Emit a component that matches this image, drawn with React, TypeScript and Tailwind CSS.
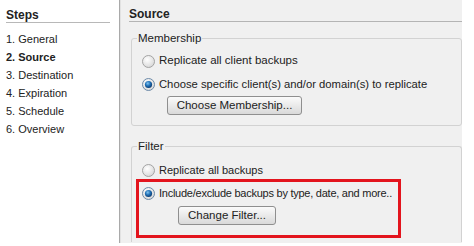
import React from "react";

const font = { fontFamily: '"Liberation Sans", Arial, sans-serif' };

function Radio({ checked }: { checked?: boolean }) {
  const id = checked ? "rc" : "ru";
  return (
    <svg width="13" height="13" viewBox="0 0 13 13" className="shrink-0">
      <defs>
        <radialGradient id={id + "bg"} cx="0.4" cy="0.35" r="0.7">
          <stop offset="0" stopColor="#ffffff" />
          <stop offset="1" stopColor="#d6d6d6" />
        </radialGradient>
        <radialGradient id={id + "dot"} cx="0.4" cy="0.35" r="0.7">
          <stop offset="0" stopColor="#7fc3f0" />
          <stop offset="0.5" stopColor="#1f6fb5" />
          <stop offset="1" stopColor="#0b3466" />
        </radialGradient>
      </defs>
      <circle cx="6.5" cy="6.5" r="6" fill={`url(#${id}bg)`} stroke={checked ? "#6d8aa8" : "#a3a3a3"} strokeWidth="1" />
      {checked && <circle cx="6.5" cy="6.5" r="3.6" fill={`url(#${id}dot)`} />}
    </svg>
  );
}

function Btn({ label, w }: { label: string; w: string }) {
  return (
    <div
      className={`${w} h-[19px] flex items-center justify-center rounded-[3px] border border-[#8f8f8f] bg-gradient-to-b from-[#fbfbfb] to-[#d9d9d9] text-[11.5px] text-[#222] whitespace-nowrap`}
    >
      {label}
    </div>
  );
}

function Row({ checked, label, cls }: { checked?: boolean; label: string; cls: string }) {
  return (
    <div className={`flex items-center h-[18px] gap-[4px] text-[#222] whitespace-nowrap ${cls}`}>
      <Radio checked={checked} />
      <span>{label}</span>
    </div>
  );
}

export default function App() {
  const steps = ["1. General", "2. Source", "3. Destination", "4. Expiration", "5. Schedule", "6. Overview"];
  return (
    <div className="w-[474px] h-[246px] bg-white flex items-start" style={font}>
      <div className="w-[119px] h-[243px] pl-[6px] pr-[9px] pt-[8px]">
        <div className="text-[12px] font-bold leading-[14px] text-[#222] border-b border-[#b8b8b8] h-[15px]">Steps</div>
        <div className="mt-[7px] flex flex-col">
          {steps.map((s, i) => (
            <div key={s} className={`h-[18px] leading-[18px] text-[11px] text-[#222] ${i === 1 ? "font-bold" : ""}`}>
              {s}
            </div>
          ))}
        </div>
      </div>
      <div className="w-[2px] h-[243px] bg-[#a9a9a9] border-r border-[#e2e2e2]" />
      <div className="w-[341px] h-[243px] bg-[#f0f0f0] pl-[8px] pt-[7px]">
        <div className="text-[12px] font-bold leading-[14px] text-[#222] border-b border-[#b4b4b4] h-[15px]">Source</div>
        <fieldset className="mt-[9px] ml-[2px] border border-[#d2d2d2] rounded-[3px] pl-[10px] pb-[10px]">
          <legend className="text-[11.5px] leading-[14px] text-[#222] px-[1px] ml-[-5px]">Membership</legend>
          <div className="pt-[7px] flex flex-col gap-[5px]">
            <Row cls="text-[11.5px]" label="Replicate all client backups" />
            <Row cls="text-[11.25px]" checked label="Choose specific client(s) and/or domain(s) to replicate" />
          </div>
          <div className="mt-[3px] ml-[25px]">
            <Btn label="Choose Membership..." w="w-[135px]" />
          </div>
        </fieldset>
        <fieldset className="mt-[13px] ml-[2px] border border-[#d2d2d2] border-b-0 rounded-t-[3px] h-[103px]">
          <legend className="text-[11.5px] leading-[14px] text-[#222] px-[1px] ml-[5px]">Filter</legend>
          <div className="pt-[8px] pl-[10px]">
            <Row cls="text-[11px]" label="Replicate all backups" />
          </div>
          <div className="ml-[4px] w-[265px] border-[3px] border-[#e3141d] pt-[2px] pb-[10px] pl-[3px]">
            <Row cls="text-[11px] tracking-[-0.25px]" checked label="Include/exclude backups by type, date, and more.." />
            <div className="mt-[4px] ml-[36px]">
              <Btn label="Change Filter..." w="w-[98px]" />
            </div>
          </div>
        </fieldset>
      </div>
    </div>
  );
}
